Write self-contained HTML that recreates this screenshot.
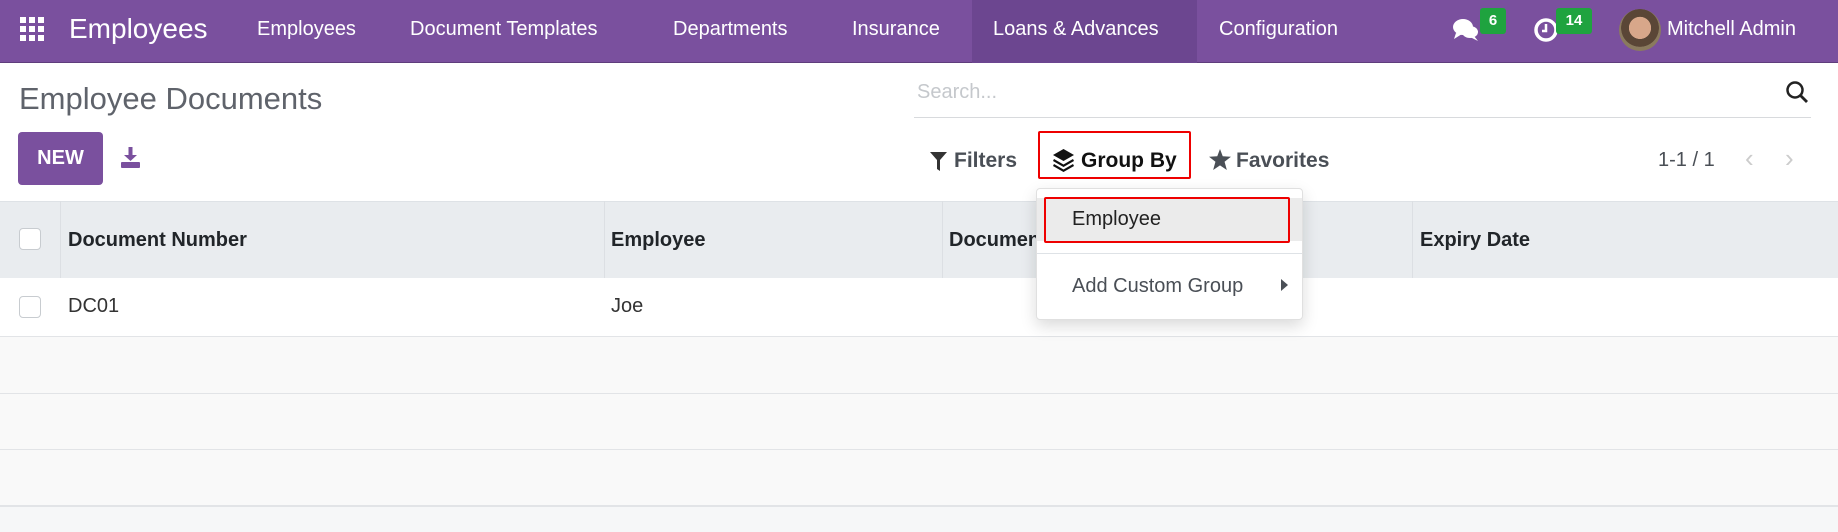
<!DOCTYPE html>
<html><head><meta charset="utf-8"><style>
*{box-sizing:border-box;margin:0;padding:0}
body{width:1838px;height:532px;overflow:hidden;background:#fff;font-family:"Liberation Sans",sans-serif;position:relative;color:#212529}
.a{position:absolute;white-space:nowrap}
.nav{position:absolute;left:0;top:0;width:1838px;height:63px;background:#7a509e;border-bottom:1px solid #5f3d7c}
.nav .a{color:#fff;font-size:20px;top:18px}
.badge{position:absolute;background:#1fa33f;color:#fff;font-size:15px;font-weight:bold;text-align:center;border-radius:3px;height:26px;line-height:26px}
.th{font-weight:bold;font-size:20px;top:229px}
.cb{position:absolute;width:22px;height:22px;border:1px solid #c8ccd0;border-radius:4px;background:#fff}
.line{position:absolute;left:0;width:1838px;height:1px;background:#e2e4e7}
</style></head><body>
<div class="nav">
 <svg class="a" style="left:20px;top:17px" width="25" height="25" viewBox="0 0 25 25" fill="#fff">
  <rect x="0" y="0" width="6" height="6"/><rect x="9" y="0" width="6" height="6"/><rect x="18" y="0" width="6" height="6"/>
  <rect x="0" y="9" width="6" height="6"/><rect x="9" y="9" width="6" height="6"/><rect x="18" y="9" width="6" height="6"/>
  <rect x="0" y="18" width="6" height="6"/><rect x="9" y="18" width="6" height="6"/><rect x="18" y="18" width="6" height="6"/></svg>
 <div class="a" style="left:69px;top:13px;font-size:28px">Employees</div>
 <div class="a" style="left:257px">Employees</div>
 <div class="a" style="left:410px">Document Templates</div>
 <div class="a" style="left:673px">Departments</div>
 <div class="a" style="left:852px">Insurance</div>
 <div style="position:absolute;left:972px;top:0;width:225px;height:63px;background:#6c4690"></div>
 <div class="a" style="left:993px">Loans &amp; Advances</div>
 <div class="a" style="left:1219px">Configuration</div>
 <svg class="a" style="left:1452px;top:17px" width="28" height="26" viewBox="0 0 28 26" fill="#fff"><ellipse cx="11" cy="10" rx="10" ry="8"/><path d="M4 16 L2 22 L10 17Z"/><ellipse cx="18" cy="15" rx="8" ry="6"/><path d="M22 19 L26 24 L18 20Z"/></svg>
 <div class="badge" style="left:1480px;top:8px;width:26px">6</div>
 <svg class="a" style="left:1533px;top:17px" width="26" height="26" viewBox="0 0 26 26"><circle cx="13" cy="13" r="10" fill="none" stroke="#fff" stroke-width="3.5"/><path d="M13 7 V14 H9" stroke="#fff" stroke-width="2.5" fill="none"/></svg>
 <div class="badge" style="left:1556px;top:8px;width:36px">14</div>
 <div style="position:absolute;left:1619px;top:9px;width:42px;height:42px;border-radius:50%;background:radial-gradient(circle at 50% 45%,#d8a78a 0 35%,#5a4636 36% 60%,#8a7a5e 61%)"></div>
 <div class="a" style="left:1667px">Mitchell Admin</div>
</div>

<div class="a" style="left:19px;top:81px;font-size:31px;color:#5f636b">Employee Documents</div>
<div style="position:absolute;left:18px;top:132px;width:85px;height:53px;background:#7a509e;border-radius:4px;color:#fff;font-weight:bold;font-size:20px;text-align:center;line-height:53px">NEW</div>
<svg class="a" style="left:120px;top:147px" width="21" height="21" viewBox="0 0 21 21" fill="#7a509e"><rect x="8.5" y="0" width="4" height="9"/><path d="M4 8 H17 L10.5 14Z"/><rect x="1" y="15" width="19" height="6" rx="1"/></svg>

<div class="a" style="left:917px;top:81px;font-size:20px;color:#c5c8cc">Search...</div>
<div style="position:absolute;left:914px;top:117px;width:897px;height:1px;background:#d8dadd"></div>
<svg class="a" style="left:1785px;top:80px" width="24" height="24" viewBox="0 0 24 24"><circle cx="10" cy="10" r="7.5" fill="none" stroke="#222" stroke-width="2.5"/><path d="M15.5 15.5 L22 22" stroke="#222" stroke-width="2.8"/></svg>

<svg class="a" style="left:930px;top:152px" width="17" height="19" viewBox="0 0 17 19" fill="#333"><path d="M0 0 H17 L10 8 V19 L7 17 V8Z"/></svg>
<div class="a" style="left:954px;top:149px;font-size:21px;font-weight:bold;color:#4a4f56">Filters</div>
<div style="position:absolute;left:1038px;top:131px;width:153px;height:48px;border:2px solid #e00;border-radius:2px"></div>
<svg class="a" style="left:1052px;top:149px" width="23" height="23" viewBox="0 0 23 23" fill="#111"><path d="M11.5 0 L22 6 L11.5 12 L1 6Z"/><path d="M2 10 L11.5 15.5 L21 10 L22 12 L11.5 18 L1 12Z"/><path d="M2 15 L11.5 20.5 L21 15 L22 17 L11.5 23 L1 17Z"/></svg>
<div class="a" style="left:1081px;top:149px;font-size:21px;font-weight:bold;color:#111">Group By</div>
<svg class="a" style="left:1209px;top:149px" width="22" height="21" viewBox="0 0 24 23" fill="#4a4f56"><path d="M12 0 L15 8 L24 8.5 L17 14 L19.5 23 L12 18 L4.5 23 L7 14 L0 8.5 L9 8Z"/></svg>
<div class="a" style="left:1236px;top:149px;font-size:21px;font-weight:bold;color:#4a4f56">Favorites</div>
<div class="a" style="left:1658px;top:149px;font-size:20px;color:#4a4f56">1-1 / 1</div>
<div class="a" style="left:1745px;top:143px;font-size:26px;color:#ccc">&#8249;</div>
<div class="a" style="left:1785px;top:143px;font-size:26px;color:#ccc">&#8250;</div>

<div style="position:absolute;left:0;top:201px;width:1838px;height:77px;background:#e9ecef;border-top:1px solid #dee2e6"></div>
<div style="position:absolute;left:60px;top:201px;width:1px;height:77px;background:#dcdfe3"></div>
<div style="position:absolute;left:604px;top:201px;width:1px;height:77px;background:#dcdfe3"></div>
<div style="position:absolute;left:942px;top:201px;width:1px;height:77px;background:#dcdfe3"></div>
<div style="position:absolute;left:1412px;top:201px;width:1px;height:77px;background:#dcdfe3"></div>
<div class="cb" style="left:19px;top:228px"></div>
<div class="a th" style="left:68px">Document Number</div>
<div class="a th" style="left:611px">Employee</div>
<div class="a th" style="left:949px">Document Type</div>
<div class="a th" style="left:1420px">Expiry Date</div>

<div style="position:absolute;left:0;top:336px;width:1838px;height:169px;background:#f9f9f9"></div>
<div style="position:absolute;left:0;top:505px;width:1838px;height:27px;background:#f6f7f8"></div>
<div class="line" style="top:336px"></div>
<div class="line" style="top:393px"></div>
<div class="line" style="top:449px"></div>
<div class="line" style="top:505px;height:2px"></div>
<div class="cb" style="left:19px;top:296px"></div>
<div class="a" style="left:68px;top:295px;font-size:20px;color:#333">DC01</div>
<div class="a" style="left:611px;top:295px;font-size:20px;color:#333">Joe</div>

<div style="position:absolute;left:1036px;top:188px;width:267px;height:132px;background:#fff;border:1px solid #e0e0e0;border-radius:4px;box-shadow:0 6px 16px rgba(0,0,0,.15)"></div>
<div style="position:absolute;left:1037px;top:198px;width:265px;height:43px;background:#ebebeb"></div>
<div style="position:absolute;left:1044px;top:197px;width:246px;height:46px;border:2px solid #e00;border-radius:2px"></div>
<div class="a" style="left:1072px;top:208px;font-size:20px;color:#222">Employee</div>
<div style="position:absolute;left:1037px;top:253px;width:265px;height:1px;background:#dee2e6"></div>
<div class="a" style="left:1072px;top:275px;font-size:20px;color:#4a4f56">Add Custom Group</div>
<svg class="a" style="left:1281px;top:279px" width="7" height="12" viewBox="0 0 7 12" fill="#4a4f56"><path d="M0 0 L7 6 L0 12Z"/></svg>
</body></html>
